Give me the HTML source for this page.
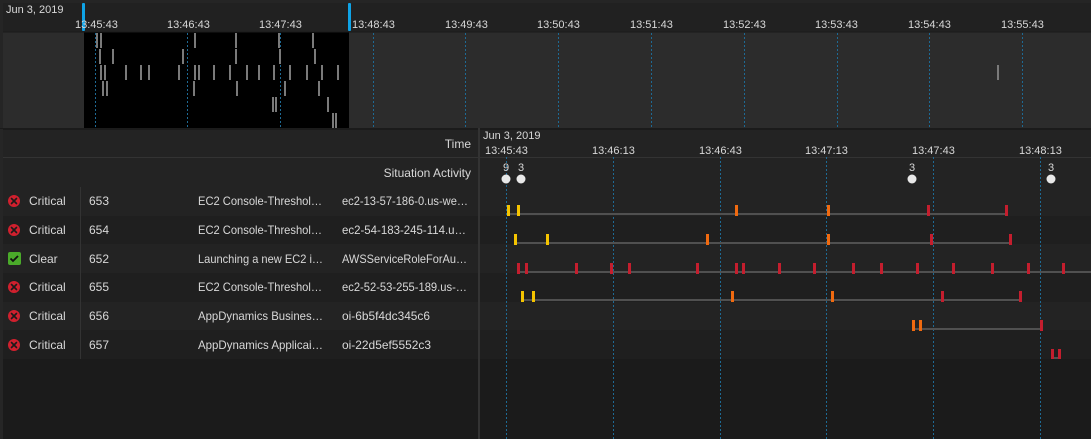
<!DOCTYPE html>
<html><head><meta charset="utf-8"><style>
html,body{margin:0;padding:0;background:#1b1b1b;width:1091px;height:439px;overflow:hidden}
svg{display:block}
text{font-family:"Liberation Sans",sans-serif;fill:#d8d8d8}
</style></head><body>
<svg width="1091" height="439" viewBox="0 0 1091 439" xmlns="http://www.w3.org/2000/svg">
<rect x="0" y="0" width="1091" height="128" fill="#252525"/>
<rect x="3" y="3" width="1088" height="29" fill="#212121"/>
<rect x="3" y="32" width="1088" height="96" fill="#2c2c2c"/>
<rect x="84" y="32" width="265" height="96" fill="#000"/>
<line x1="3" y1="32" x2="1091" y2="32" fill="none" stroke="#1a1a1a"/>
<g stroke="#1e6a94" stroke-dasharray="2,2" stroke-width="1">
<line x1="95.5" y1="33" x2="95.5" y2="128"/><line x1="187.5" y1="33" x2="187.5" y2="128"/><line x1="280.5" y1="33" x2="280.5" y2="128"/><line x1="373.5" y1="33" x2="373.5" y2="128"/><line x1="465.5" y1="33" x2="465.5" y2="128"/><line x1="558.5" y1="33" x2="558.5" y2="128"/><line x1="651.5" y1="33" x2="651.5" y2="128"/><line x1="744.5" y1="33" x2="744.5" y2="128"/><line x1="837.5" y1="33" x2="837.5" y2="128"/><line x1="929.5" y1="33" x2="929.5" y2="128"/><line x1="1022.5" y1="33" x2="1022.5" y2="128"/>
</g>
<g fill="#7a7a7a">
<rect x="96" y="33" width="2" height="15"/><rect x="100" y="33" width="2" height="15"/><rect x="194" y="33" width="2" height="15"/><rect x="235" y="33" width="2" height="15"/><rect x="278" y="33" width="2" height="15"/><rect x="312" y="33" width="2" height="15"/>
<rect x="99" y="49" width="2" height="15"/><rect x="112" y="49" width="2" height="15"/><rect x="182" y="49" width="2" height="15"/><rect x="235" y="49" width="2" height="15"/><rect x="279" y="49" width="2" height="15"/><rect x="314" y="49" width="2" height="15"/>
<rect x="100" y="65" width="2" height="15"/><rect x="104" y="65" width="2" height="15"/><rect x="125" y="65" width="2" height="15"/><rect x="140" y="65" width="2" height="15"/><rect x="148" y="65" width="2" height="15"/><rect x="178" y="65" width="2" height="15"/><rect x="194" y="65" width="2" height="15"/><rect x="198" y="65" width="2" height="15"/><rect x="213" y="65" width="2" height="15"/><rect x="229" y="65" width="2" height="15"/><rect x="246" y="65" width="2" height="15"/><rect x="258" y="65" width="2" height="15"/><rect x="273" y="65" width="2" height="15"/><rect x="289" y="65" width="2" height="15"/><rect x="306" y="65" width="2" height="15"/><rect x="321" y="65" width="2" height="15"/><rect x="337" y="65" width="2" height="15"/><rect x="997" y="65" width="2" height="15"/>
<rect x="102" y="81" width="2" height="15"/><rect x="106" y="81" width="2" height="15"/><rect x="193" y="81" width="2" height="15"/><rect x="236" y="81" width="2" height="15"/><rect x="284" y="81" width="2" height="15"/><rect x="318" y="81" width="2" height="15"/>
<rect x="272" y="97" width="2" height="15"/><rect x="275" y="97" width="2" height="15"/><rect x="327" y="97" width="2" height="15"/>
<rect x="332" y="113" width="2" height="15"/><rect x="335" y="113" width="2" height="15"/>
</g>
<rect x="82" y="3" width="3" height="28" fill="#0fa3e6" rx="1"/>
<rect x="348" y="3" width="3" height="28" fill="#0fa3e6" rx="1"/>
<text x="6" y="13" font-size="11">Jun 3, 2019</text>
<g font-size="11">
<text x="75" y="28">13:45:43</text><text x="167" y="28">13:46:43</text><text x="259" y="28">13:47:43</text><text x="352" y="28">13:48:43</text><text x="445" y="28">13:49:43</text><text x="537" y="28">13:50:43</text><text x="630" y="28">13:51:43</text><text x="723" y="28">13:52:43</text><text x="815" y="28">13:53:43</text><text x="908" y="28">13:54:43</text><text x="1001" y="28">13:55:43</text>
</g>
<rect x="0" y="128" width="1091" height="311" fill="#1b1b1b"/>
<rect x="3" y="130" width="1088" height="57" fill="#232323"/>
<line x1="3" y1="157.5" x2="1091" y2="157.5" stroke="#333"/>
<rect x="0" y="129" width="3" height="310" fill="#262626"/>
<rect x="3" y="187" width="1088" height="29" fill="#232323"/>
<rect x="3" y="216" width="1088" height="28" fill="#1f1f1f"/>
<rect x="3" y="244" width="1088" height="29" fill="#232323"/>
<rect x="3" y="273" width="1088" height="29" fill="#1f1f1f"/>
<rect x="3" y="302" width="1088" height="28" fill="#232323"/>
<rect x="3" y="330" width="1088" height="29" fill="#1f1f1f"/>
<line x1="80.5" y1="187" x2="80.5" y2="359" stroke="#333"/>
<rect x="478" y="128" width="2" height="311" fill="#333"/>
<text x="471" y="148" font-size="12" text-anchor="end">Time</text>
<text x="471" y="177" font-size="12" text-anchor="end">Situation Activity</text>
<g>
<circle cx="14" cy="201" r="6" fill="#d0202e"/><circle cx="14" cy="230" r="6" fill="#d0202e"/><circle cx="14" cy="287" r="6" fill="#d0202e"/><circle cx="14" cy="316" r="6" fill="#d0202e"/><circle cx="14" cy="345" r="6" fill="#d0202e"/>
<g stroke="#1b1b1b" stroke-width="1.6" stroke-linecap="round">
<path d="M11.5 198.5l5 5M16.5 198.5l-5 5"/><path d="M11.5 227.5l5 5M16.5 227.5l-5 5"/><path d="M11.5 284.5l5 5M16.5 284.5l-5 5"/><path d="M11.5 313.5l5 5M16.5 313.5l-5 5"/><path d="M11.5 342.5l5 5M16.5 342.5l-5 5"/>
</g>
<rect x="8" y="252" width="13" height="13" rx="2" fill="#4aaa2a"/>
<path d="M10.5 258.5l2.5 2.5 5-5" stroke="#111" stroke-width="1.8" fill="none"/>
</g>
<g font-size="12">
<text x="29" y="205">Critical</text><text x="89" y="205">653</text><text x="198" y="205" textLength="124" lengthAdjust="spacingAndGlyphs">EC2 Console-Threshol…</text><text x="342" y="205" textLength="126" lengthAdjust="spacingAndGlyphs">ec2-13-57-186-0.us-we…</text>
<text x="29" y="234">Critical</text><text x="89" y="234">654</text><text x="198" y="234" textLength="124" lengthAdjust="spacingAndGlyphs">EC2 Console-Threshol…</text><text x="342" y="234" textLength="124" lengthAdjust="spacingAndGlyphs">ec2-54-183-245-114.u…</text>
<text x="29" y="263">Clear</text><text x="89" y="263">652</text><text x="198" y="263" textLength="125" lengthAdjust="spacingAndGlyphs">Launching a new EC2 i…</text><text x="342" y="263" textLength="125" lengthAdjust="spacingAndGlyphs">AWSServiceRoleForAu…</text>
<text x="29" y="291">Critical</text><text x="89" y="291">655</text><text x="198" y="291" textLength="124" lengthAdjust="spacingAndGlyphs">EC2 Console-Threshol…</text><text x="342" y="291" textLength="125" lengthAdjust="spacingAndGlyphs">ec2-52-53-255-189.us-…</text>
<text x="29" y="320">Critical</text><text x="89" y="320">656</text><text x="198" y="320" textLength="125" lengthAdjust="spacingAndGlyphs">AppDynamics Busines…</text><text x="342" y="320" textLength="88" lengthAdjust="spacingAndGlyphs">oi-6b5f4dc345c6</text>
<text x="29" y="349">Critical</text><text x="89" y="349">657</text><text x="198" y="349" textLength="125" lengthAdjust="spacingAndGlyphs">AppDynamics Applicai…</text><text x="342" y="349" textLength="89" lengthAdjust="spacingAndGlyphs">oi-22d5ef5552c3</text>
</g>
<text x="483" y="139" font-size="11">Jun 3, 2019</text>
<g font-size="11">
<text x="485" y="154">13:45:43</text><text x="592" y="154">13:46:13</text><text x="699" y="154">13:46:43</text><text x="805" y="154">13:47:13</text><text x="912" y="154">13:47:43</text><text x="1019" y="154">13:48:13</text>
</g>
<g stroke="#1e6a94" stroke-dasharray="2,2">
<line x1="506.5" y1="157" x2="506.5" y2="439"/><line x1="613.5" y1="157" x2="613.5" y2="439"/><line x1="720.5" y1="157" x2="720.5" y2="439"/><line x1="826.5" y1="157" x2="826.5" y2="439"/><line x1="933.5" y1="157" x2="933.5" y2="439"/><line x1="1040.5" y1="157" x2="1040.5" y2="439"/>
</g>
<g fill="#e8e8e8"><circle cx="506" cy="179" r="4.5"/><circle cx="521" cy="179" r="4.5"/><circle cx="912" cy="179" r="4.5"/><circle cx="1051" cy="179" r="4.5"/></g>
<g font-size="11" text-anchor="middle"><text x="506" y="171">9</text><text x="521" y="171">3</text><text x="912" y="171">3</text><text x="1051" y="171">3</text></g>
<g fill="#505050">
<rect x="508" y="213" width="498" height="2"/><rect x="515" y="242" width="495" height="2"/><rect x="518" y="271" width="573" height="2"/><rect x="522" y="299" width="498" height="2"/><rect x="913" y="328" width="128" height="2"/><rect x="1053" y="357" width="8" height="2"/>
</g>
<g>
<rect x="507" y="205" width="3" height="11" fill="#f5c400"/><rect x="517" y="205" width="3" height="11" fill="#f5c400"/><rect x="735" y="205" width="3" height="11" fill="#f06a10"/><rect x="827" y="205" width="3" height="11" fill="#f06a10"/><rect x="927" y="205" width="3" height="11" fill="#c41e2e"/><rect x="1005" y="205" width="3" height="11" fill="#c41e2e"/>
<rect x="514" y="234" width="3" height="11" fill="#f5c400"/><rect x="546" y="234" width="3" height="11" fill="#f5c400"/><rect x="706" y="234" width="3" height="11" fill="#f06a10"/><rect x="827" y="234" width="3" height="11" fill="#f06a10"/><rect x="930" y="234" width="3" height="11" fill="#c41e2e"/><rect x="1009" y="234" width="3" height="11" fill="#c41e2e"/>
<g fill="#c41e2e">
<rect x="517" y="263" width="3" height="11"/><rect x="525" y="263" width="3" height="11"/><rect x="575" y="263" width="3" height="11"/><rect x="610" y="263" width="3" height="11"/><rect x="628" y="263" width="3" height="11"/><rect x="696" y="263" width="3" height="11"/><rect x="735" y="263" width="3" height="11"/><rect x="742" y="263" width="3" height="11"/><rect x="778" y="263" width="3" height="11"/><rect x="813" y="263" width="3" height="11"/><rect x="852" y="263" width="3" height="11"/><rect x="880" y="263" width="3" height="11"/><rect x="916" y="263" width="3" height="11"/><rect x="952" y="263" width="3" height="11"/><rect x="991" y="263" width="3" height="11"/><rect x="1027" y="263" width="3" height="11"/><rect x="1062" y="263" width="3" height="11"/>
</g>
<rect x="521" y="291" width="3" height="11" fill="#f5c400"/><rect x="532" y="291" width="3" height="11" fill="#f5c400"/><rect x="731" y="291" width="3" height="11" fill="#f06a10"/><rect x="831" y="291" width="3" height="11" fill="#f06a10"/><rect x="941" y="291" width="3" height="11" fill="#c41e2e"/><rect x="1019" y="291" width="3" height="11" fill="#c41e2e"/>
<rect x="912" y="320" width="3" height="11" fill="#f06a10"/><rect x="919" y="320" width="3" height="11" fill="#f06a10"/><rect x="1040" y="320" width="3" height="11" fill="#c41e2e"/>
<rect x="1051" y="349" width="3" height="10" fill="#c41e2e"/><rect x="1058" y="349" width="3" height="10" fill="#c41e2e"/>
</g>
</svg>
</body></html>
